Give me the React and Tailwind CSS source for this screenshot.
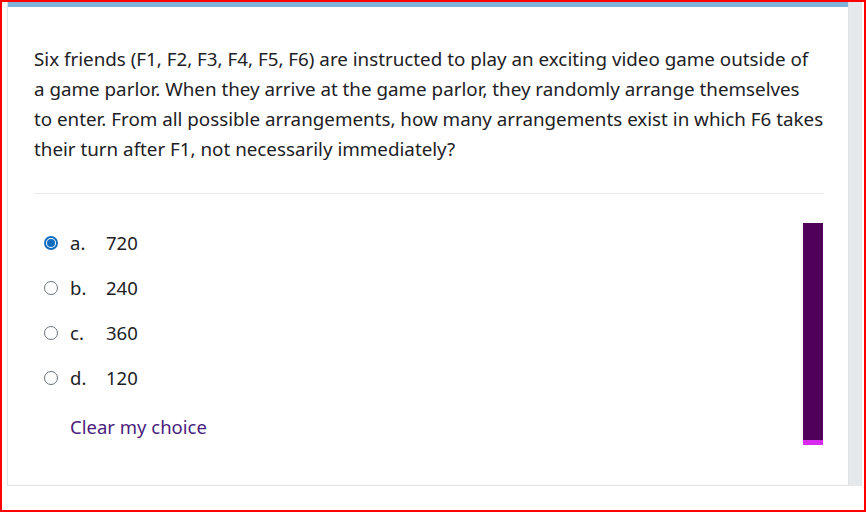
import React, { useState } from "react";

const options = [
  { key: "a.", value: "720" },
  { key: "b.", value: "240" },
  { key: "c.", value: "360" },
  { key: "d.", value: "120" },
];

export default function App() {
  const [choice, setChoice] = useState(0);

  return (
    <div
      className="h-[512px] w-[866px] overflow-hidden border-2 border-[#ff0000] bg-white text-[#1d2125]"
      style={{ fontFamily: '"Segoe UI", "Noto Sans", sans-serif' }}
    >
      <div className="flex h-[484px]">
        <div className="ml-[5px] flex w-[842px] flex-col border-x border-b border-[#dee2e6] bg-white">
          <div className="h-[5px] bg-[#7fb3d9]" />
          <div className="px-[26px] pt-[37px]">
            <p className="whitespace-nowrap text-[18.8px] leading-[30px]">
              Six friends (F1, F2, F3, F4, F5, F6) are instructed to play an exciting video game outside of
              <br />
              a game parlor. When they arrive at the game parlor, they randomly arrange themselves
              <br />
              to enter. From all possible arrangements, how many arrangements exist in which F6 takes
              <br />
              their turn after F1, not necessarily immediately?
            </p>
            <div className="mt-[29px] h-px w-[790px] bg-[#e9ecef]" />
            <div className="-mr-px flex pt-[26px]">
              <div className="flex flex-1 flex-col">
                {options.map((o, i) => (
                  <label
                    key={o.key}
                    className="flex h-[45px] cursor-pointer items-center text-[18.5px]"
                    onClick={() => setChoice(i)}
                  >
                    <span className="ml-[10px] flex h-[14px] w-[14px] items-center justify-center">
                      {choice === i ? (
                        <span className="flex h-[14px] w-[14px] items-center justify-center rounded-full border-2 border-[#0f6cbf]">
                          <span className="h-[8px] w-[8px] rounded-full bg-[#0f6cbf]" />
                        </span>
                      ) : (
                        <span className="h-[14px] w-[14px] rounded-full border border-[#6a737b]" />
                      )}
                    </span>
                    <span className="ml-[12px] w-[36px]">{o.key}</span>
                    <span>{o.value}</span>
                  </label>
                ))}
                <div className="pl-[36px] pt-[13px] text-[18.5px] text-[#4a1c7c]">Clear my choice</div>
              </div>
              <div className="mt-[3px] flex w-[20px] flex-col">
                <div className="h-[217px] bg-[#51005a]" />
                <div className="h-[5px] bg-[#d92bf0]" />
              </div>
            </div>
          </div>
        </div>
        <div className="w-[13px] bg-[#e6e9ec]" />
      </div>
    </div>
  );
}
